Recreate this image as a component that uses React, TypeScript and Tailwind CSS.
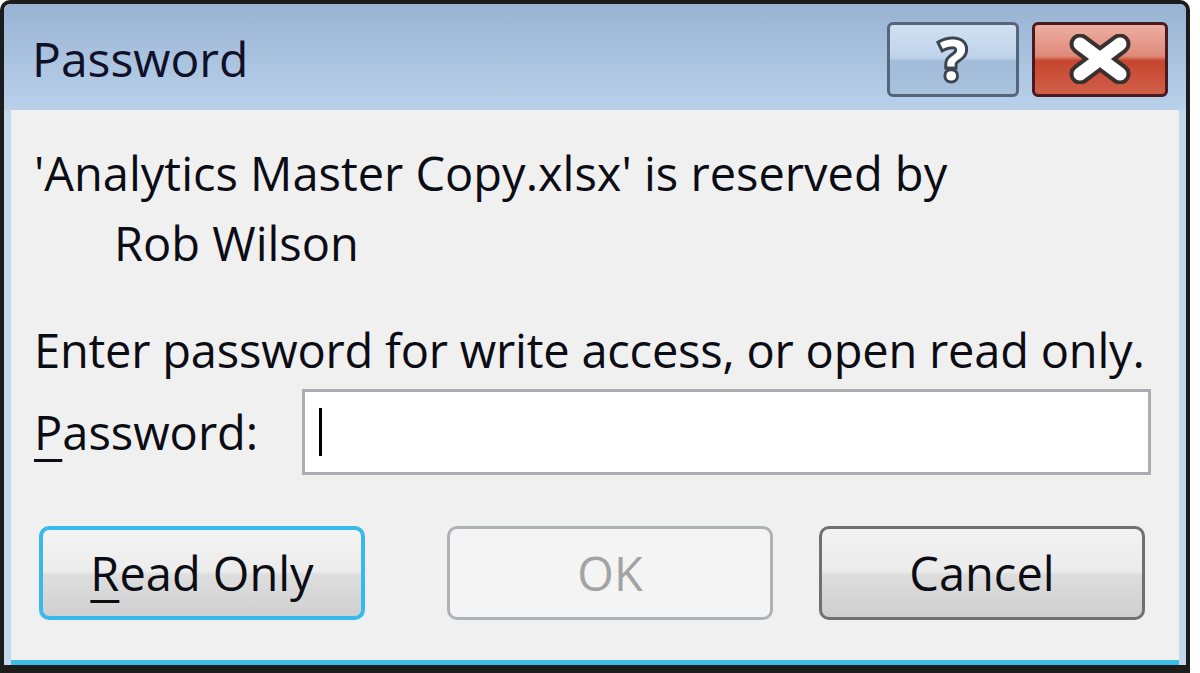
import React from "react";

const font = { fontFamily: '"Open Sans", "Noto Sans", sans-serif' };

const App = () => {
  return (
    <div className="w-[1200px] h-[673px] bg-white overflow-hidden" style={font}>
      <div className="w-[1190px] h-[673px] rounded-t-[10px] border-[4px] border-b-[8px] border-[#1c1c1c] bg-[#c4d7ec] flex flex-col">
        {/* TITLE BAR */}
        <div className="h-[106px] shrink-0 rounded-t-[6px] bg-gradient-to-b from-[#98b3d3] to-[#bad1ea] flex items-center pl-[28px] pr-[18px]">
          <span className="text-[48px] text-[#101028] mt-[4px]">Password</span>
          <div className="ml-auto flex gap-[13px] mt-[4px]">
            <div className="w-[132px] h-[75px] rounded-[6px] border-[3px] border-[#56657a] bg-[linear-gradient(#d2e1f1_0%,#bed2e9_48%,#a2bcd9_52%,#a9c2de_100%)] flex items-center justify-center">
              <span className="text-[56px] font-bold text-white leading-none [-webkit-text-stroke:6px_#3c4450] [paint-order:stroke_fill] mt-[-2px]">?</span>
            </div>
            <div className="w-[136px] h-[75px] rounded-[6px] border-[3px] border-[#4a1a1c] bg-[linear-gradient(#edaea3_0%,#df8a7a_45%,#c6452e_52%,#d0604a_100%)] flex items-center justify-center">
              <svg width="66" height="50" viewBox="0 0 66 50">
                <path d="M13 10 L53 40 M53 10 L13 40" stroke="#3a3030" strokeWidth="21" strokeLinecap="round" />
                <path d="M13 10 L53 40 M53 10 L13 40" stroke="#ffffff" strokeWidth="13" strokeLinecap="round" />
              </svg>
            </div>
          </div>
        </div>
        {/* BODY */}
        <div className="flex-1 flex flex-col mx-[7px] bg-[#f0f0f0] border-b-[5px] border-[#3cbde8] pt-[28px] pl-[23px] pr-[28px] text-[47px] text-[#0c0c14] whitespace-nowrap">
          <div className="leading-[70px]">'Analytics Master Copy.xlsx' is reserved by</div>
          <div className="leading-[70px] pl-[80px]">Rob Wilson</div>
          <div className="leading-[70px] mt-[37px] tracking-[-0.2px]">Enter password for write access, or open read only.</div>
          <div className="flex items-center mt-[4px]">
            <span className="w-[268px]">
              <span className="underline underline-offset-[9px] decoration-[3px]">P</span>assword:
            </span>
            <div className="flex-1 h-[86px] bg-white border-[3px] border-[#abadb3] flex items-center pl-[14px]">
              <div className="w-[3px] h-[48px] bg-black" />
            </div>
          </div>
          <div className="flex mt-[51px]">
            <button className="ml-[5px] w-[326px] h-[94px] rounded-[10px] border-[4px] border-[#38b9ec] bg-[linear-gradient(#f4f4f4_0%,#ececec_48%,#dedede_52%,#d0d0d0_100%)] flex items-center justify-center">
              <span>
                <span className="underline underline-offset-[9px] decoration-[3px]">R</span>ead Only
              </span>
            </button>
            <button className="ml-[82px] w-[326px] h-[94px] rounded-[10px] border-[3px] border-[#adb2b5] bg-[#f4f4f4] text-[#a3a3a3] flex items-center justify-center">
              OK
            </button>
            <button className="ml-[46px] w-[326px] h-[94px] rounded-[10px] border-[3px] border-[#707070] bg-[linear-gradient(#f2f2f2_0%,#ebebeb_48%,#dddddd_52%,#cfcfcf_100%)] flex items-center justify-center">
              Cancel
            </button>
          </div>
        </div>
      </div>
    </div>
  );
};

export default App;
